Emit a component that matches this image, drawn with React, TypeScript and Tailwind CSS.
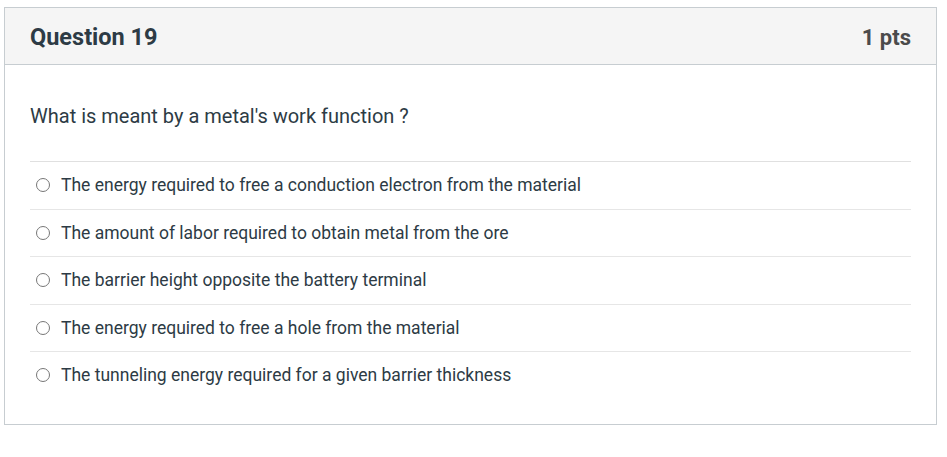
const answers = [
  'The energy required to free a conduction electron from the material',
  'The amount of labor required to obtain metal from the ore',
  'The barrier height opposite the battery terminal',
  'The energy required to free a hole from the material',
  'The tunneling energy required for a given barrier thickness',
];

export default function App() {
  return (
    <div className="min-h-screen bg-white pl-[4px] pt-[7px] font-['Roboto','Liberation_Sans',sans-serif] text-[#2d3b45]">
      <div className="w-[933px] border border-[#c7cdd1]">
        <div className="flex h-[57px] items-baseline justify-between border-b border-[#c7cdd1] bg-[#f5f5f5] px-[25px] pt-[18px]">
          <h2 className="text-[23.5px] font-bold leading-none">Question 19</h2>
          <span className="text-[22px] font-bold leading-none text-[#4b4b4b]">1 pts</span>
        </div>
        <div className="px-[25px] pb-[25px] pt-[38px]">
          <p className="mb-[31px] text-[20px] leading-[27px]">What is meant by a metal's work function ?</p>
          <div>
            {answers.map((a) => (
              <label key={a} className="flex h-[47.5px] items-center gap-[11px] border-t border-[#e6e6e6] pl-[6px] first:border-[#e0e0e0]">
                <span className="h-[14px] w-[14px] rounded-full border border-[#777] bg-white" />
                <span className="text-[17.5px]">{a}</span>
              </label>
            ))}
          </div>
        </div>
      </div>
    </div>
  );
}
